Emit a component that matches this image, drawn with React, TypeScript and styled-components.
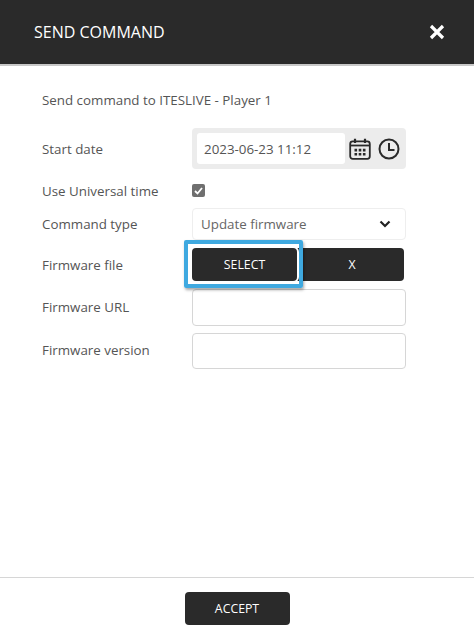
import React from 'react';
import styled, { createGlobalStyle } from 'styled-components';

const GlobalStyle = createGlobalStyle`
  html, body {
    margin: 0;
    padding: 0;
    background: #fff;
  }
  body {
    font-family: "Open Sans", "Liberation Sans", sans-serif;
    color: #555;
  }
`;

const Dialog = styled.div`
  width: 474px;
  height: 636px;
  display: flex;
  flex-direction: column;
  overflow: hidden;
  background: #fff;
`;

const Header = styled.header`
  flex: none;
  height: 64px;
  display: flex;
  align-items: center;
  justify-content: space-between;
  padding: 0 29px 0 34px;
  background: #2a2a2a;
  border-bottom: 2px solid #c8c8c8;
`;

const Title = styled.h1`
  margin: 0;
  font-size: 16px;
  font-weight: 400;
  color: #fff;
`;

const CloseIcon = styled.svg`
  display: block;
  width: 16px;
  height: 16px;
`;

const Body = styled.main`
  flex: 1;
  padding: 25px 68px 0 42px;
`;

const Intro = styled.p`
  margin: 0 0 19px;
  font-size: 13.35px;
  line-height: 18px;
  color: #555;
`;

const Form = styled.div`
  display: grid;
  grid-template-columns: 150px 214px;
`;

const Label = styled.div<{ $height: number; $gap?: number; $lift?: number }>`
  height: ${(p) => p.$height}px;
  box-sizing: border-box;
  padding-bottom: ${(p) => p.$lift ?? 0}px;
  margin-bottom: ${(p) => p.$gap ?? 0}px;
  display: flex;
  align-items: center;
  font-size: 13.35px;
  color: #555;
`;

const Field = styled.div<{ $height: number; $gap?: number }>`
  height: ${(p) => p.$height}px;
  margin-bottom: ${(p) => p.$gap ?? 0}px;
  display: flex;
  align-items: center;
`;

const DatePanel = styled(Field)`
  gap: 4px;
  padding: 0 6px 0 5px;
  background: #ececec;
  border-radius: 4px;
`;

const DateValue = styled.div`
  width: 148px;
  height: 31px;
  box-sizing: border-box;
  padding-left: 7px;
  display: flex;
  align-items: center;
  font-size: 13.35px;
  color: #555;
  background: #fff;
  border-radius: 3px;
`;

const PickerIcon = styled.svg<{ $offset?: number }>`
  flex: none;
  display: block;
  width: 22px;
  height: 22px;
  margin-left: ${(p) => p.$offset ?? 0}px;
`;

const Check = styled.span`
  width: 13px;
  height: 13px;
  display: flex;
  align-items: center;
  justify-content: center;
  background: #6f6f6f;
  border-radius: 2px;
`;

const SelectBox = styled.div`
  width: 100%;
  height: 100%;
  box-sizing: border-box;
  padding: 0 14px 0 8px;
  display: flex;
  align-items: center;
  justify-content: space-between;
  font-size: 13.35px;
  color: #666;
  background: #fff;
  border: 1px solid #eee;
  border-radius: 4px;
`;

const Chevron = styled.svg`
  display: block;
  width: 12px;
  height: 8px;
`;

const FileButtons = styled.div`
  width: 212px;
  height: 100%;
  display: flex;
`;

const ClearButton = styled.button`
  flex: 1;
  height: 100%;
  padding: 0 0 0 3px;
  font-family: inherit;
  font-size: 12.3px;
  color: #fff;
  background: #2a2a2a;
  border: 0;
  border-radius: 0 4px 4px 0;
`;

const SelectButton = styled.button`
  position: relative;
  z-index: 1;
  width: 105px;
  height: 100%;
  padding: 0;
  font-family: inherit;
  font-size: 12.3px;
  color: #fff;
  background: #2a2a2a;
  border: 0;
  border-radius: 4px;
  box-shadow: 0 0 0 2px #fff;

  /* blue callout drawn over the screenshot */
  &::after {
    content: '';
    position: absolute;
    inset: -8px -6px -7px -8px;
    border: 4px solid #3fa9e0;
    border-radius: 2px;
    box-shadow: 1px 2px 3px rgba(0, 0, 0, 0.35);
  }
`;

const TextBox = styled.div`
  width: 100%;
  height: 100%;
  box-sizing: border-box;
  background: #fff;
  border: 1.5px solid #d6d6d6;
  border-radius: 4px;
`;

const Footer = styled.footer`
  flex: none;
  height: 59px;
  display: flex;
  justify-content: center;
  padding-top: 14px;
  box-sizing: border-box;
  border-top: 1px solid #d6d6d6;
`;

const AcceptButton = styled.button`
  width: 105px;
  height: 33px;
  padding: 0;
  font-family: inherit;
  font-size: 12.3px;
  color: #fff;
  background: #2a2a2a;
  border: 0;
  border-radius: 4px;
`;

const App: React.FC = () => {
  return (
    <Dialog>
      <GlobalStyle />
      <Header>
        <Title>SEND COMMAND</Title>
        <CloseIcon viewBox="0 0 16 16">
          <path d="M2 2 L14 14 M14 2 L2 14" stroke="#fff" strokeWidth="3.2" fill="none" />
        </CloseIcon>
      </Header>
      <Body>
        <Intro>Send command to ITESLIVE - Player 1</Intro>
        <Form>
          <Label $height={41} $gap={12}>Start date</Label>
          <DatePanel $height={41} $gap={12}>
            <DateValue>2023-06-23 11:12</DateValue>
            <PickerIcon viewBox="0 0 22 22">
              <rect x="1.2" y="3.4" width="19.6" height="17.4" rx="2.5" fill="none" stroke="#2a2a2a" strokeWidth="1.8" />
              <path d="M1.5 7.5 H20.5" stroke="#2a2a2a" strokeWidth="1.8" />
              <path d="M6 .8 V5 M16 .8 V5" stroke="#2a2a2a" strokeWidth="2.2" />
              <path
                d="M5.5 10.8 h2.6 v2.6 h-2.6z M9.7 10.8 h2.6 v2.6 h-2.6z M13.9 10.8 h2.6 v2.6 h-2.6z M5.5 15 h2.6 v2.6 h-2.6z M9.7 15 h2.6 v2.6 h-2.6z M13.9 15 h2.6 v2.6 h-2.6z"
                fill="#2a2a2a"
              />
            </PickerIcon>
            <PickerIcon viewBox="0 0 22 22" $offset={3}>
              <circle cx="11" cy="11" r="9.5" fill="none" stroke="#2a2a2a" strokeWidth="2" />
              <path d="M11 5 V12 H16.5" fill="none" stroke="#2a2a2a" strokeWidth="2" />
            </PickerIcon>
          </DatePanel>

          <Label $height={19} $gap={8}>Use Universal time</Label>
          <Field $height={19} $gap={8}>
            <Check>
              <svg width="9" height="8" viewBox="0 0 9 8">
                <path d="M1 4 L3.5 6.5 L8 1" fill="none" stroke="#fff" strokeWidth="1.8" />
              </svg>
            </Check>
          </Field>

          <Label $height={32} $gap={8}>Command type</Label>
          <Field $height={32} $gap={8}>
            <SelectBox>
              Update firmware
              <Chevron viewBox="0 0 12 8">
                <path d="M1.5 1.5 L6 6 L10.5 1.5" fill="none" stroke="#222" strokeWidth="2.2" />
              </Chevron>
            </SelectBox>
          </Field>

          <Label $height={33} $gap={8}>Firmware file</Label>
          <Field $height={33} $gap={8}>
            <FileButtons>
              <SelectButton>SELECT</SelectButton>
              <ClearButton>X</ClearButton>
            </FileButtons>
          </Field>

          <Label $height={37} $gap={7} $lift={2}>Firmware URL</Label>
          <Field $height={37} $gap={7}>
            <TextBox />
          </Field>

          <Label $height={36} $lift={2}>Firmware version</Label>
          <Field $height={36}>
            <TextBox />
          </Field>
        </Form>
      </Body>
      <Footer>
        <AcceptButton>ACCEPT</AcceptButton>
      </Footer>
    </Dialog>
  );
};

export default App;
